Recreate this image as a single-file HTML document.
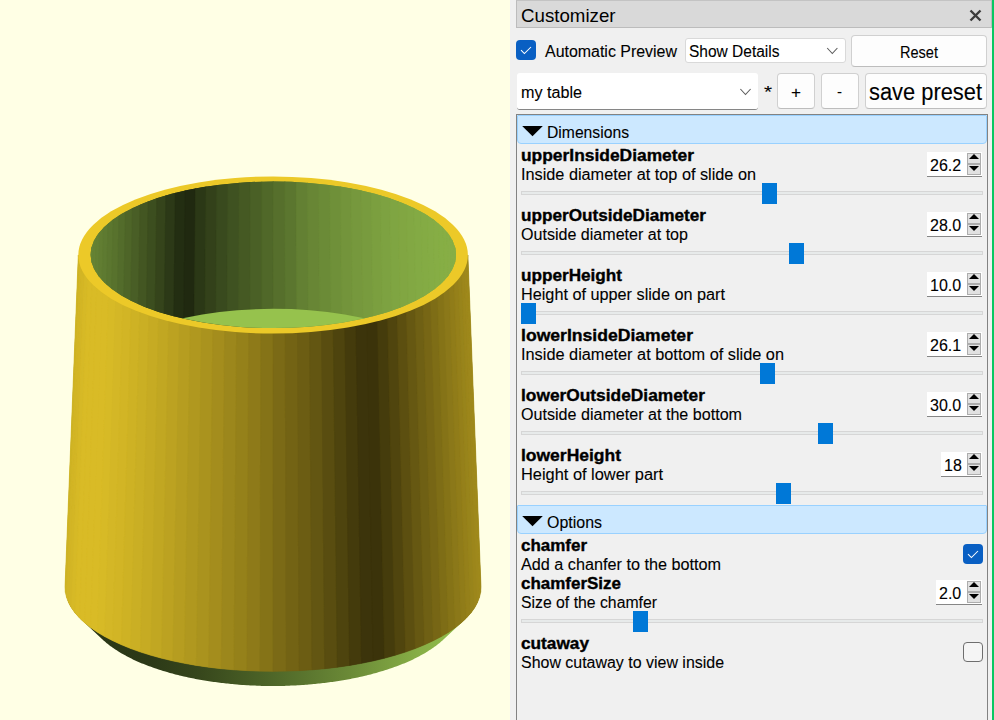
<!DOCTYPE html>
<html><head><meta charset="utf-8"><title>Customizer</title>
<style>
html,body{margin:0;padding:0}
body{width:994px;height:720px;overflow:hidden;background:#f0f0f0;position:relative;font-family:"Liberation Sans",sans-serif;color:#000}
.abs,.t,.spin,.groove,.handle,.btn,.combo,.hdr,.cb{position:absolute;box-sizing:border-box}
.t{-webkit-text-stroke:0.1px #000;white-space:nowrap;display:inline-block;transform-origin:0 50%}
.b{font-weight:bold;-webkit-text-stroke:0.35px #000}
#view{left:0;top:0;width:510px;height:720px;background:#ffffe5;overflow:hidden}
#title{left:516px;top:0;width:476px;height:28px;background:#d9d9d9;border:1px solid #bcbcbc;border-top-color:#c3c3c3}
#green{left:992px;top:0;width:2px;height:720px;background:#08c862}
#frame{left:516px;top:114px;width:472px;height:620px;border:1px solid #828282;background:#f0f0f0}
.hdr{left:517px;width:470px;height:29px;background:#cce8ff;border:1px solid #99d1ff;border-radius:1px 1px 4px 4px}
.tri{position:absolute;left:5.7px;width:0;height:0;border-left:9.8px solid transparent;border-right:9.8px solid transparent;border-top:9.8px solid #000}
.spin{height:25px;background:#fff;border-bottom:1px solid #868686}
.sv{-webkit-text-stroke:0.1px #000;position:absolute;left:3px;top:5px;font-size:16px;line-height:18px;white-space:nowrap;display:inline-block;transform-origin:0 50%}
.ub,.db{position:absolute;right:1px;width:14px;height:11px;background:#e1e1e1;border:1px solid #adadad;box-sizing:border-box}
.ub{top:1px} .db{top:12px}
.ub:after,.db:after{content:"";position:absolute;left:1px;width:0;height:0;border-left:5px solid transparent;border-right:5px solid transparent}
.ub:after{top:0.4px;border-bottom:5.5px solid #000}
.db:after{top:1.1px;border-top:5.5px solid #000}
.groove{left:521px;width:462px;height:4px;background:#e7eaea;border:1px solid #d6d6d6}
.handle{width:15px;height:21px;background:#0078d7}
.btn{background:#fdfdfd;border:1px solid #d0d0d0;border-radius:4px;border-bottom-color:#bdbdbd}
.combo{background:#fff;border:1px solid #d9d9d9;border-radius:3px}
.cb{width:20px;height:20px;border-radius:4px;background:#095fc3}
.cb.off{background:#f5f5f5;border:1px solid #6e6e6e}
</style></head><body>
<div id="view" class="abs">
<svg width="510" height="720" viewBox="0 0 510 720" style="position:absolute;left:0;top:0">
<defs>
<linearGradient id="gb" gradientUnits="userSpaceOnUse" x1="65" y1="0" x2="481" y2="0"><stop offset="0.0000" stop-color="#c2a822"/><stop offset="0.0168" stop-color="#d1b525"/><stop offset="0.0409" stop-color="#d9bb26"/><stop offset="0.0841" stop-color="#d9bb26"/><stop offset="0.1466" stop-color="#d0b425"/><stop offset="0.2524" stop-color="#bca221"/><stop offset="0.3606" stop-color="#a48e1d"/><stop offset="0.4688" stop-color="#8a7718"/><stop offset="0.5168" stop-color="#7a6916"/><stop offset="0.5986" stop-color="#665812"/><stop offset="0.6514" stop-color="#53480f"/><stop offset="0.7043" stop-color="#40370b"/><stop offset="0.7404" stop-color="#38300a"/><stop offset="0.7861" stop-color="#4a400d"/><stop offset="0.8389" stop-color="#645612"/><stop offset="0.9183" stop-color="#847217"/><stop offset="0.9856" stop-color="#9f8a1c"/><stop offset="1.0000" stop-color="#a48e1d"/></linearGradient>
<linearGradient id="gi" gradientUnits="userSpaceOnUse" x1="90" y1="0" x2="456" y2="0"><stop offset="0.0000" stop-color="#6b8a37"/><stop offset="0.0082" stop-color="#668435"/><stop offset="0.0683" stop-color="#59732e"/><stop offset="0.1284" stop-color="#485d25"/><stop offset="0.1885" stop-color="#37471c"/><stop offset="0.2486" stop-color="#232d12"/><stop offset="0.2732" stop-color="#1f2910"/><stop offset="0.3087" stop-color="#2e3b17"/><stop offset="0.3689" stop-color="#3b4c1e"/><stop offset="0.4590" stop-color="#4b6127"/><stop offset="0.5464" stop-color="#5b762f"/><stop offset="0.5847" stop-color="#648234"/><stop offset="0.7049" stop-color="#73953c"/><stop offset="0.8279" stop-color="#7fa442"/><stop offset="0.9481" stop-color="#86ae45"/><stop offset="1.0000" stop-color="#87af46"/></linearGradient>
<linearGradient id="gc" gradientUnits="userSpaceOnUse" x1="93" y1="0" x2="452" y2="0"><stop offset="0.0000" stop-color="#2a3716"/><stop offset="0.1588" stop-color="#2c3917"/><stop offset="0.2981" stop-color="#37471c"/><stop offset="0.4986" stop-color="#4e6628"/><stop offset="0.7159" stop-color="#6b8a37"/><stop offset="0.9109" stop-color="#87af46"/><stop offset="1.0000" stop-color="#90bb4b"/></linearGradient>
<clipPath id="cin"><ellipse cx="273.3" cy="254.8" rx="182.7" ry="73.3"/></clipPath>
</defs>
<path d="M478.4 600.2 L478.1 600.9 L477.8 601.6 L477.5 602.4 L477.2 603.1 L476.8 603.8 L476.4 604.5 L476.1 605.2 L475.7 606.0 L475.2 606.7 L474.8 607.4 L474.4 608.1 L473.9 608.8 L473.4 609.5 L472.9 610.2 L472.4 610.9 L471.9 611.6 L471.4 612.4 L470.8 613.0 L470.2 613.8 L469.7 614.5 L469.1 615.1 L468.5 615.8 L467.8 616.5 L467.2 617.2 L466.5 617.9 L465.9 618.6 L465.2 619.3 L464.5 619.9 L463.0 621.3 L443.2 639.8 L442.5 640.4 L441.8 641.0 L441.1 641.6 L440.4 642.2 L439.6 642.9 L438.9 643.5 L438.1 644.1 L437.3 644.7 L435.8 645.9 L434.9 646.5 L434.1 647.1 L433.3 647.7 L432.4 648.3 L430.7 649.5 L429.8 650.0 L428.9 650.6 L428.0 651.2 L427.1 651.8 L425.2 652.9 L424.3 653.4 L423.3 654.0 L421.4 655.1 L420.4 655.6 L419.4 656.2 L418.3 656.7 L417.3 657.2 L416.2 657.8 L415.2 658.3 L414.1 658.8 L413.1 659.4 L412.0 659.9 L410.9 660.4 L409.8 660.9 L408.6 661.4 L407.5 661.9 L406.4 662.4 L405.2 662.9 L404.1 663.4 L402.9 663.8 L400.5 664.8 L398.1 665.7 L396.9 666.2 L394.4 667.1 L393.2 667.5 L391.9 668.0 L389.4 668.8 L388.1 669.2 L386.8 669.7 L385.5 670.1 L382.9 670.9 L381.6 671.3 L378.9 672.1 L376.2 672.9 L373.5 673.6 L372.1 674.0 L370.7 674.4 L369.3 674.7 L367.9 675.1 L366.5 675.4 L365.1 675.8 L362.2 676.4 L359.4 677.1 L357.9 677.4 L356.4 677.7 L355.0 678.0 L353.5 678.3 L352.0 678.6 L350.6 678.9 L347.6 679.5 L346.1 679.7 L344.6 680.0 L343.1 680.2 L341.5 680.5 L338.5 681.0 L337.0 681.2 L335.4 681.5 L333.9 681.7 L332.3 681.9 L330.8 682.1 L329.2 682.3 L327.7 682.5 L326.1 682.8 L324.5 682.9 L323.0 683.1 L321.4 683.3 L319.8 683.5 L318.2 683.6 L316.6 683.8 L315.1 684.0 L313.5 684.1 L311.9 684.3 L308.7 684.5 L307.1 684.7 L305.5 684.8 L303.9 684.9 L302.2 685.0 L299.0 685.2 L297.4 685.3 L295.8 685.4 L292.6 685.6 L290.9 685.6 L289.3 685.7 L287.7 685.8 L286.0 685.8 L284.4 685.9 L282.8 685.9 L279.5 686.0 L277.9 686.0 L276.3 686.0 L274.6 686.0 L271.4 686.0 L269.7 686.0 L268.1 686.0 L266.5 686.0 L263.2 685.9 L261.6 685.9 L260.0 685.8 L258.3 685.8 L256.7 685.7 L255.1 685.6 L253.4 685.6 L250.2 685.4 L248.6 685.3 L247.0 685.2 L243.8 685.0 L242.1 684.9 L238.9 684.7 L237.3 684.5 L234.1 684.3 L232.5 684.1 L230.9 684.0 L229.3 683.8 L227.8 683.6 L226.2 683.5 L224.6 683.3 L223.0 683.1 L221.5 682.9 L219.9 682.8 L218.3 682.5 L216.8 682.3 L215.2 682.1 L213.7 681.9 L212.1 681.7 L209.0 681.2 L207.5 681.0 L204.5 680.5 L202.9 680.2 L201.4 680.0 L199.9 679.7 L198.4 679.5 L195.4 678.9 L194.0 678.6 L192.5 678.3 L191.0 678.0 L189.6 677.7 L188.1 677.4 L186.7 677.1 L183.8 676.4 L180.9 675.8 L179.5 675.4 L178.1 675.1 L176.7 674.7 L175.3 674.4 L173.9 674.0 L172.5 673.6 L169.8 672.9 L167.1 672.1 L164.4 671.3 L163.1 670.9 L160.5 670.1 L159.2 669.7 L157.9 669.2 L156.6 668.8 L154.1 668.0 L152.8 667.5 L151.6 667.1 L150.3 666.6 L149.1 666.2 L147.9 665.7 L145.5 664.8 L143.1 663.8 L141.9 663.4 L140.8 662.9 L139.6 662.4 L138.5 661.9 L137.3 661.4 L136.2 660.9 L135.1 660.4 L134.0 659.9 L132.9 659.4 L131.9 658.8 L130.8 658.3 L129.8 657.8 L127.7 656.7 L126.7 656.2 L125.6 655.6 L124.6 655.1 L122.7 654.0 L121.7 653.4 L120.8 652.9 L118.9 651.8 L118.0 651.2 L117.1 650.6 L116.2 650.0 L115.3 649.5 L113.6 648.3 L112.7 647.7 L111.9 647.1 L111.0 646.5 L110.2 645.9 L108.7 644.7 L107.9 644.1 L107.1 643.5 L106.4 642.9 L105.7 642.2 L104.9 641.6 L104.2 641.0 L103.5 640.4 L102.8 639.8 L83.0 621.3 L81.5 619.9 L80.8 619.3 L80.2 618.6 L79.5 617.9 L78.8 617.2 L78.2 616.5 L77.5 615.8 L76.9 615.1 L76.3 614.5 L75.8 613.8 L75.2 613.0 L74.6 612.4 L74.1 611.6 L73.6 610.9 L73.1 610.2 L72.6 609.5 L72.1 608.8 L71.6 608.1 L71.2 607.4 L70.8 606.7 L70.3 606.0 L69.9 605.2 L69.5 604.5 L69.2 603.8 L68.8 603.1 L68.5 602.4 L68.2 601.6 L67.8 600.9 L67.6 600.2 Z" fill="url(#gc)"/>
<g fill="url(#gb)">
<ellipse cx="273" cy="587" rx="208" ry="84.3"/>
<path d="M78.3 255 L467.8 255 L481 587 L65 587 Z"/>
</g>
<path d="M78.3 255.0L78.7 259.9L65.4 592.3L65.0 587.0Z" fill="#cdb124" stroke="#cdb124" stroke-width="0.6"/>
<path d="M78.7 259.9L79.8 264.9L66.6 597.6L65.4 592.3Z" fill="#cfb325" stroke="#cfb325" stroke-width="0.6"/>
<path d="M79.8 264.9L81.8 269.7L68.7 602.8L66.6 597.6Z" fill="#d2b525" stroke="#d2b525" stroke-width="0.6"/>
<path d="M81.8 269.7L84.4 274.5L71.5 608.0L68.7 602.8Z" fill="#d3b625" stroke="#d3b625" stroke-width="0.6"/>
<path d="M84.4 274.5L87.8 279.3L75.2 613.1L71.5 608.0Z" fill="#d6b926" stroke="#d6b926" stroke-width="0.6"/>
<path d="M87.8 279.3L92.0 283.9L79.6 618.0L75.2 613.1Z" fill="#d9bb26" stroke="#d9bb26" stroke-width="0.6"/>
<path d="M92.0 283.9L96.8 288.5L84.8 622.9L79.6 618.0Z" fill="#d9bb26" stroke="#d9bb26" stroke-width="0.6"/>
<path d="M96.8 288.5L102.4 292.9L90.7 627.6L84.8 622.9Z" fill="#d9bb26" stroke="#d9bb26" stroke-width="0.6"/>
<path d="M102.4 292.9L108.6 297.1L97.4 632.2L90.7 627.6Z" fill="#d9bb26" stroke="#d9bb26" stroke-width="0.6"/>
<path d="M108.6 297.1L115.5 301.2L104.7 636.6L97.4 632.2Z" fill="#d7ba26" stroke="#d7ba26" stroke-width="0.6"/>
<path d="M115.5 301.2L123.0 305.1L112.7 640.7L104.7 636.6Z" fill="#d4b726" stroke="#d4b726" stroke-width="0.6"/>
<path d="M123.0 305.1L131.1 308.8L121.4 644.7L112.7 640.7Z" fill="#d2b525" stroke="#d2b525" stroke-width="0.6"/>
<path d="M131.1 308.8L139.8 312.3L130.6 648.5L121.4 644.7Z" fill="#ceb224" stroke="#ceb224" stroke-width="0.6"/>
<path d="M139.8 312.3L148.9 315.6L140.4 652.0L130.6 648.5Z" fill="#caaf24" stroke="#caaf24" stroke-width="0.6"/>
<path d="M148.9 315.6L158.6 318.6L150.7 655.2L140.4 652.0Z" fill="#c6ab23" stroke="#c6ab23" stroke-width="0.6"/>
<path d="M158.6 318.6L168.7 321.4L161.5 658.2L150.7 655.2Z" fill="#c1a722" stroke="#c1a722" stroke-width="0.6"/>
<path d="M168.7 321.4L179.3 323.9L172.8 660.9L161.5 658.2Z" fill="#bca221" stroke="#bca221" stroke-width="0.6"/>
<path d="M179.3 323.9L190.2 326.1L184.4 663.3L172.8 660.9Z" fill="#b69d20" stroke="#b69d20" stroke-width="0.6"/>
<path d="M190.2 326.1L201.4 328.1L196.4 665.4L184.4 663.3Z" fill="#b0981f" stroke="#b0981f" stroke-width="0.6"/>
<path d="M201.4 328.1L212.9 329.8L208.7 667.2L196.4 665.4Z" fill="#aa931e" stroke="#aa931e" stroke-width="0.6"/>
<path d="M212.9 329.8L224.7 331.1L221.3 668.7L208.7 667.2Z" fill="#a48d1d" stroke="#a48d1d" stroke-width="0.6"/>
<path d="M224.7 331.1L236.6 332.2L234.0 669.8L221.3 668.7Z" fill="#9c871c" stroke="#9c871c" stroke-width="0.6"/>
<path d="M236.6 332.2L248.7 333.0L246.9 670.6L234.0 669.8Z" fill="#95811a" stroke="#95811a" stroke-width="0.6"/>
<path d="M248.7 333.0L260.9 333.4L259.9 671.1L246.9 670.6Z" fill="#8e7a19" stroke="#8e7a19" stroke-width="0.6"/>
<path d="M260.9 333.4L273.1 333.6L273.0 671.3L259.9 671.1Z" fill="#857317" stroke="#857317" stroke-width="0.6"/>
<path d="M273.1 333.6L285.3 333.4L286.1 671.1L273.0 671.3Z" fill="#7b6a16" stroke="#7b6a16" stroke-width="0.6"/>
<path d="M285.3 333.4L297.5 333.0L299.1 670.6L286.1 671.1Z" fill="#736314" stroke="#736314" stroke-width="0.6"/>
<path d="M297.5 333.0L309.6 332.2L312.0 669.8L299.1 670.6Z" fill="#6c5d13" stroke="#6c5d13" stroke-width="0.6"/>
<path d="M309.6 332.2L321.5 331.1L324.7 668.7L312.0 669.8Z" fill="#635612" stroke="#635612" stroke-width="0.6"/>
<path d="M321.5 331.1L333.3 329.8L337.3 667.2L324.7 668.7Z" fill="#594d10" stroke="#594d10" stroke-width="0.6"/>
<path d="M333.3 329.8L344.8 328.1L349.6 665.4L337.3 667.2Z" fill="#4e440e" stroke="#4e440e" stroke-width="0.6"/>
<path d="M344.8 328.1L356.0 326.1L361.6 663.3L349.6 665.4Z" fill="#443b0c" stroke="#443b0c" stroke-width="0.6"/>
<path d="M356.0 326.1L366.9 323.9L373.2 660.9L361.6 663.3Z" fill="#3c340b" stroke="#3c340b" stroke-width="0.6"/>
<path d="M366.9 323.9L377.5 321.4L384.5 658.2L373.2 660.9Z" fill="#3b330a" stroke="#3b330a" stroke-width="0.6"/>
<path d="M377.5 321.4L387.6 318.6L395.3 655.2L384.5 658.2Z" fill="#453c0c" stroke="#453c0c" stroke-width="0.6"/>
<path d="M387.6 318.6L397.3 315.6L405.6 652.0L395.3 655.2Z" fill="#50450e" stroke="#50450e" stroke-width="0.6"/>
<path d="M397.3 315.6L406.4 312.3L415.4 648.5L405.6 652.0Z" fill="#5c4f10" stroke="#5c4f10" stroke-width="0.6"/>
<path d="M406.4 312.3L415.1 308.8L424.6 644.7L415.4 648.5Z" fill="#665812" stroke="#665812" stroke-width="0.6"/>
<path d="M415.1 308.8L423.2 305.1L433.3 640.7L424.6 644.7Z" fill="#6f6014" stroke="#6f6014" stroke-width="0.6"/>
<path d="M423.2 305.1L430.7 301.2L441.3 636.6L433.3 640.7Z" fill="#776615" stroke="#776615" stroke-width="0.6"/>
<path d="M430.7 301.2L437.6 297.1L448.6 632.2L441.3 636.6Z" fill="#7e6d16" stroke="#7e6d16" stroke-width="0.6"/>
<path d="M437.6 297.1L443.8 292.9L455.3 627.6L448.6 632.2Z" fill="#857317" stroke="#857317" stroke-width="0.6"/>
<path d="M443.8 292.9L449.4 288.5L461.2 622.9L455.3 627.6Z" fill="#8b7819" stroke="#8b7819" stroke-width="0.6"/>
<path d="M449.4 288.5L454.2 283.9L466.4 618.0L461.2 622.9Z" fill="#907c19" stroke="#907c19" stroke-width="0.6"/>
<path d="M454.2 283.9L458.4 279.3L470.8 613.1L466.4 618.0Z" fill="#95801a" stroke="#95801a" stroke-width="0.6"/>
<path d="M458.4 279.3L461.8 274.5L474.5 608.0L470.8 613.1Z" fill="#98841b" stroke="#98841b" stroke-width="0.6"/>
<path d="M461.8 274.5L464.4 269.7L477.3 602.8L474.5 608.0Z" fill="#9c861b" stroke="#9c861b" stroke-width="0.6"/>
<path d="M464.4 269.7L466.4 264.9L479.4 597.6L477.3 602.8Z" fill="#9e881c" stroke="#9e881c" stroke-width="0.6"/>
<path d="M466.4 264.9L467.5 259.9L480.6 592.3L479.4 597.6Z" fill="#9f8a1c" stroke="#9f8a1c" stroke-width="0.6"/>
<path d="M467.5 259.9L467.9 255.0L481.0 587.0L480.6 592.3Z" fill="#a08a1c" stroke="#a08a1c" stroke-width="0.6"/>
<ellipse cx="273.1" cy="255" rx="194.8" ry="78.6" fill="#ecc928"/>
<ellipse cx="273.3" cy="254.8" rx="182.7" ry="73.3" fill="url(#gi)"/>
<g clip-path="url(#cin)">
<path d="M90.6 251.8L91.0 247.2L87.9 379.1L87.5 383.8Z" fill="#6a8937" stroke="#6a8937" stroke-width="0.6"/>
<path d="M91.0 247.2L92.0 242.6L89.0 374.4L87.9 379.1Z" fill="#698736" stroke="#698736" stroke-width="0.6"/>
<path d="M92.0 242.6L93.8 238.1L90.8 369.7L89.0 374.4Z" fill="#668435" stroke="#668435" stroke-width="0.6"/>
<path d="M93.8 238.1L96.3 233.6L93.3 365.1L90.8 369.7Z" fill="#658234" stroke="#658234" stroke-width="0.6"/>
<path d="M96.3 233.6L99.5 229.1L96.6 360.6L93.3 365.1Z" fill="#638033" stroke="#638033" stroke-width="0.6"/>
<path d="M99.5 229.1L103.4 224.8L100.6 356.2L96.6 360.6Z" fill="#617d32" stroke="#617d32" stroke-width="0.6"/>
<path d="M103.4 224.8L108.0 220.6L105.2 351.9L100.6 356.2Z" fill="#5e7a31" stroke="#5e7a31" stroke-width="0.6"/>
<path d="M108.0 220.6L113.2 216.5L110.5 347.7L105.2 351.9Z" fill="#5b762f" stroke="#5b762f" stroke-width="0.6"/>
<path d="M113.2 216.5L119.0 212.5L116.5 343.6L110.5 347.7Z" fill="#58722d" stroke="#58722d" stroke-width="0.6"/>
<path d="M119.0 212.5L125.5 208.7L123.0 339.7L116.5 343.6Z" fill="#536c2b" stroke="#536c2b" stroke-width="0.6"/>
<path d="M125.5 208.7L132.5 205.1L130.2 336.0L123.0 339.7Z" fill="#4e6528" stroke="#4e6528" stroke-width="0.6"/>
<path d="M132.5 205.1L140.1 201.6L137.9 332.5L130.2 336.0Z" fill="#495e26" stroke="#495e26" stroke-width="0.6"/>
<path d="M140.1 201.6L148.2 198.4L146.2 329.1L137.9 332.5Z" fill="#435622" stroke="#435622" stroke-width="0.6"/>
<path d="M148.2 198.4L156.8 195.3L154.9 326.0L146.2 329.1Z" fill="#3c4e1f" stroke="#3c4e1f" stroke-width="0.6"/>
<path d="M156.8 195.3L165.9 192.5L164.2 323.1L154.9 326.0Z" fill="#35441b" stroke="#35441b" stroke-width="0.6"/>
<path d="M165.9 192.5L175.4 189.9L173.8 320.5L164.2 323.1Z" fill="#2c3917" stroke="#2c3917" stroke-width="0.6"/>
<path d="M175.4 189.9L185.3 187.6L183.9 318.1L173.8 320.5Z" fill="#232e12" stroke="#232e12" stroke-width="0.6"/>
<path d="M185.3 187.6L195.5 185.5L194.3 315.9L183.9 318.1Z" fill="#202910" stroke="#202910" stroke-width="0.6"/>
<path d="M195.5 185.5L206.0 183.6L205.0 314.1L194.3 315.9Z" fill="#2b3816" stroke="#2b3816" stroke-width="0.6"/>
<path d="M206.0 183.6L216.8 182.1L216.0 312.5L205.0 314.1Z" fill="#33411a" stroke="#33411a" stroke-width="0.6"/>
<path d="M216.8 182.1L227.9 180.8L227.2 311.2L216.0 312.5Z" fill="#394a1e" stroke="#394a1e" stroke-width="0.6"/>
<path d="M227.9 180.8L239.1 179.8L238.6 310.1L227.2 311.2Z" fill="#3f5221" stroke="#3f5221" stroke-width="0.6"/>
<path d="M239.1 179.8L250.4 179.1L250.2 309.4L238.6 310.1Z" fill="#455923" stroke="#455923" stroke-width="0.6"/>
<path d="M250.4 179.1L261.8 178.6L261.8 308.9L250.2 309.4Z" fill="#4a6026" stroke="#4a6026" stroke-width="0.6"/>
<path d="M261.8 178.6L273.3 178.5L273.5 308.8L261.8 308.9Z" fill="#506829" stroke="#506829" stroke-width="0.6"/>
<path d="M273.3 178.5L284.8 178.6L285.2 308.9L273.5 308.8Z" fill="#566f2c" stroke="#566f2c" stroke-width="0.6"/>
<path d="M284.8 178.6L296.2 179.1L296.8 309.4L285.2 308.9Z" fill="#5b762f" stroke="#5b762f" stroke-width="0.6"/>
<path d="M296.2 179.1L307.5 179.8L308.4 310.1L296.8 309.4Z" fill="#638033" stroke="#638033" stroke-width="0.6"/>
<path d="M307.5 179.8L318.7 180.8L319.8 311.2L308.4 310.1Z" fill="#688635" stroke="#688635" stroke-width="0.6"/>
<path d="M318.7 180.8L329.8 182.1L331.0 312.5L319.8 311.2Z" fill="#6b8b37" stroke="#6b8b37" stroke-width="0.6"/>
<path d="M329.8 182.1L340.6 183.6L342.0 314.1L331.0 312.5Z" fill="#6f9039" stroke="#6f9039" stroke-width="0.6"/>
<path d="M340.6 183.6L351.1 185.5L352.7 315.9L342.0 314.1Z" fill="#73943b" stroke="#73943b" stroke-width="0.6"/>
<path d="M351.1 185.5L361.3 187.6L363.1 318.1L352.7 315.9Z" fill="#76983d" stroke="#76983d" stroke-width="0.6"/>
<path d="M361.3 187.6L371.2 189.9L373.2 320.5L363.1 318.1Z" fill="#789b3e" stroke="#789b3e" stroke-width="0.6"/>
<path d="M371.2 189.9L380.7 192.5L382.8 323.1L373.2 320.5Z" fill="#7b9f3f" stroke="#7b9f3f" stroke-width="0.6"/>
<path d="M380.7 192.5L389.8 195.3L392.1 326.0L382.8 323.1Z" fill="#7da241" stroke="#7da241" stroke-width="0.6"/>
<path d="M389.8 195.3L398.4 198.4L400.8 329.1L392.1 326.0Z" fill="#7fa542" stroke="#7fa542" stroke-width="0.6"/>
<path d="M398.4 198.4L406.5 201.6L409.1 332.5L400.8 329.1Z" fill="#81a642" stroke="#81a642" stroke-width="0.6"/>
<path d="M406.5 201.6L414.1 205.1L416.8 336.0L409.1 332.5Z" fill="#82a843" stroke="#82a843" stroke-width="0.6"/>
<path d="M414.1 205.1L421.1 208.7L424.0 339.7L416.8 336.0Z" fill="#83aa44" stroke="#83aa44" stroke-width="0.6"/>
<path d="M421.1 208.7L427.6 212.5L430.5 343.6L424.0 339.7Z" fill="#84ab44" stroke="#84ab44" stroke-width="0.6"/>
<path d="M427.6 212.5L433.4 216.5L436.5 347.7L430.5 343.6Z" fill="#85ac45" stroke="#85ac45" stroke-width="0.6"/>
<path d="M433.4 216.5L438.6 220.6L441.8 351.9L436.5 347.7Z" fill="#86ad45" stroke="#86ad45" stroke-width="0.6"/>
<path d="M438.6 220.6L443.2 224.8L446.4 356.2L441.8 351.9Z" fill="#86ae45" stroke="#86ae45" stroke-width="0.6"/>
<path d="M443.2 224.8L447.1 229.1L450.4 360.6L446.4 356.2Z" fill="#87ae45" stroke="#87ae45" stroke-width="0.6"/>
<path d="M447.1 229.1L450.3 233.6L453.7 365.1L450.4 360.6Z" fill="#87ae46" stroke="#87ae46" stroke-width="0.6"/>
<path d="M450.3 233.6L452.8 238.1L456.2 369.7L453.7 365.1Z" fill="#87ae46" stroke="#87ae46" stroke-width="0.6"/>
<path d="M452.8 238.1L454.6 242.6L458.0 374.4L456.2 369.7Z" fill="#87ae46" stroke="#87ae46" stroke-width="0.6"/>
<path d="M454.6 242.6L455.6 247.2L459.1 379.1L458.0 374.4Z" fill="#87af46" stroke="#87af46" stroke-width="0.6"/>
<path d="M455.6 247.2L456.0 251.8L459.5 383.8L459.1 379.1Z" fill="#87af46" stroke="#87af46" stroke-width="0.6"/>
<ellipse cx="273.5" cy="383.8" rx="186" ry="75" fill="#96c24d"/>
</g>
</svg>
</div>
<div id="title" class="abs"></div>
<span class="t" style="left:521px;top:5.1px;font-size:18.6px;line-height:21px;-webkit-text-stroke:0;transform:scaleX(1.0050);">Customizer</span>
<svg class="abs" style="left:969px;top:9px" width="13" height="13" viewBox="0 0 13 13"><path d="M1.5 1.5 L11.5 11.5 M11.5 1.5 L1.5 11.5" stroke="#3c3c3c" stroke-width="2.4" fill="none"/></svg>
<div id="green" class="abs"></div>

<div class="cb" style="left:516px;top:40px"><svg width="20" height="20" viewBox="0 0 20 20"><path d="M5 10.2 L8.4 13.6 L15 7" stroke="#fff" stroke-width="1.05" fill="none"/></svg></div>
<span class="t" style="left:545px;top:43px;font-size:16px;line-height:18px;transform:scaleX(0.9962);">Automatic Preview</span>
<div class="combo" style="left:685px;top:38px;width:161px;height:25px"></div>
<span class="t" style="left:689px;top:43px;font-size:16px;line-height:18px;transform:scaleX(0.9692);">Show Details</span>
<svg class="abs" style="left:826px;top:46px" width="13" height="10" viewBox="0 0 13 10"><path d="M1.2 2 L6.3 7.5 L11.4 2" stroke="#5c5c5c" stroke-width="1.1" fill="none"/></svg>
<div class="btn" style="left:851px;top:35px;width:136px;height:32px"></div>
<span class="t" style="left:900px;top:44px;font-size:16px;line-height:18px;transform:scaleX(0.9092);">Reset</span>

<div class="combo" style="left:517px;top:73px;width:241px;height:37px;border:none;border-bottom:1px solid #868686;border-radius:3px"></div>
<span class="t" style="left:521px;top:84px;font-size:16px;line-height:18px;transform:scaleX(1.0088);">my table</span>
<svg class="abs" style="left:739px;top:86.5px" width="13" height="10" viewBox="0 0 13 10"><path d="M1.4 2 L6.5 7.5 L11.6 2" stroke="#5c5c5c" stroke-width="1.1" fill="none"/></svg>
<span class="t" style="left:763.5px;top:83.5px;font-size:16px;line-height:18px;transform:scaleX(1.2832);">*</span>
<div class="btn" style="left:777px;top:73px;width:38px;height:36px"></div>
<span class="t" style="left:791px;top:83.7px;font-size:16px;line-height:18px;transform:scaleX(1.0702);">+</span>
<div class="btn" style="left:821px;top:73px;width:38px;height:36px"></div>
<span class="t" style="left:837px;top:83px;font-size:16px;line-height:18px;transform:scaleX(0.9384);">-</span>
<div class="btn" style="left:865px;top:73px;width:122px;height:36px"></div>
<span class="t" style="left:869px;top:79px;font-size:23px;line-height:26px;transform:scaleX(0.9503);">save preset</span>

<div id="frame" class="abs"></div>
<div class="hdr" style="top:115px"></div><svg class="abs" style="left:520px;top:124px" width="26" height="14" viewBox="0 0 26 14"><path d="M2.2 2 L22.8 2 L12.5 12.2 Z" fill="#000"/></svg>
<span class="t" style="left:547px;top:124px;font-size:16px;line-height:18px;transform:scaleX(0.9809);">Dimensions</span>
<span class="t b" style="left:521px;top:147px;font-size:16px;line-height:18px;transform:scaleX(1.0870);">upperInsideDiameter</span>
<span class="t" style="left:521px;top:166px;font-size:16px;line-height:18px;transform:scaleX(1.0162);">Inside diameter at top of slide on</span>
<div class="spin" style="left:927px;top:152px;width:55px"><span class="sv">26.2</span><i class="ub"></i><i class="db"></i></div>
<div class="groove" style="top:191px"></div><div class="handle" style="left:762px;top:183px"></div>
<span class="t b" style="left:521px;top:207px;font-size:16px;line-height:18px;transform:scaleX(1.0726);">upperOutsideDiameter</span>
<span class="t" style="left:521px;top:226px;font-size:16px;line-height:18px;transform:scaleX(1.0041);">Outside diameter at top</span>
<div class="spin" style="left:927px;top:212px;width:55px"><span class="sv">28.0</span><i class="ub"></i><i class="db"></i></div>
<div class="groove" style="top:251px"></div><div class="handle" style="left:789px;top:243px"></div>
<span class="t b" style="left:521px;top:267px;font-size:16px;line-height:18px;transform:scaleX(1.0720);">upperHeight</span>
<span class="t" style="left:521px;top:286px;font-size:16px;line-height:18px;transform:scaleX(1.0148);">Height of upper slide on part</span>
<div class="spin" style="left:927px;top:272px;width:55px"><span class="sv">10.0</span><i class="ub"></i><i class="db"></i></div>
<div class="groove" style="top:311px"></div><div class="handle" style="left:521px;top:303px"></div>
<span class="t b" style="left:521px;top:327px;font-size:16px;line-height:18px;transform:scaleX(1.0990);">lowerInsideDiameter</span>
<span class="t" style="left:521px;top:346px;font-size:16px;line-height:18px;transform:scaleX(1.0197);">Inside diameter at bottom of slide on</span>
<div class="spin" style="left:927px;top:332px;width:55px"><span class="sv">26.1</span><i class="ub"></i><i class="db"></i></div>
<div class="groove" style="top:371px"></div><div class="handle" style="left:760px;top:363px"></div>
<span class="t b" style="left:521px;top:387px;font-size:16px;line-height:18px;transform:scaleX(1.0834);">lowerOutsideDiameter</span>
<span class="t" style="left:521px;top:406px;font-size:16px;line-height:18px;transform:scaleX(1.0060);">Outside diameter at the bottom</span>
<div class="spin" style="left:927px;top:392px;width:55px"><span class="sv">30.0</span><i class="ub"></i><i class="db"></i></div>
<div class="groove" style="top:431px"></div><div class="handle" style="left:818px;top:423px"></div>
<span class="t b" style="left:521px;top:447px;font-size:16px;line-height:18px;transform:scaleX(1.0922);">lowerHeight</span>
<span class="t" style="left:521px;top:466px;font-size:16px;line-height:18px;transform:scaleX(1.0235);">Height of lower part</span>
<div class="spin" style="left:941px;top:452px;width:41px"><span class="sv">18</span><i class="ub"></i><i class="db"></i></div>
<div class="groove" style="top:491px"></div><div class="handle" style="left:776px;top:483px"></div>
<div class="hdr" style="top:505px"></div><svg class="abs" style="left:520px;top:514px" width="26" height="14" viewBox="0 0 26 14"><path d="M2.2 2 L22.8 2 L12.5 12.2 Z" fill="#000"/></svg>
<span class="t" style="left:547px;top:514px;font-size:16px;line-height:18px;transform:scaleX(0.9974);">Options</span>
<span class="t b" style="left:521px;top:537px;font-size:16px;line-height:18px;transform:scaleX(1.0602);">chamfer</span>
<span class="t" style="left:521px;top:556px;font-size:16px;line-height:18px;transform:scaleX(1.0128);">Add a chanfer to the bottom</span>
<div class="cb" style="left:963px;top:544px"><svg width="20" height="20" viewBox="0 0 20 20"><path d="M5 10.2 L8.4 13.6 L15 7" stroke="#fff" stroke-width="1.05" fill="none"/></svg></div>
<span class="t b" style="left:521px;top:575px;font-size:16px;line-height:18px;transform:scaleX(1.0608);">chamferSize</span>
<span class="t" style="left:521px;top:594px;font-size:16px;line-height:18px;transform:scaleX(0.9866);">Size of the chamfer</span>
<div class="spin" style="left:936px;top:580px;width:46px"><span class="sv">2.0</span><i class="ub"></i><i class="db"></i></div>
<div class="groove" style="top:619px"></div><div class="handle" style="left:633px;top:611px"></div>
<span class="t b" style="left:521px;top:635px;font-size:16px;line-height:18px;transform:scaleX(1.0770);">cutaway</span>
<span class="t" style="left:521px;top:654px;font-size:16px;line-height:18px;transform:scaleX(0.9968);">Show cutaway to view inside</span>
<div class="cb off" style="left:963px;top:642px"></div>

</body></html>
